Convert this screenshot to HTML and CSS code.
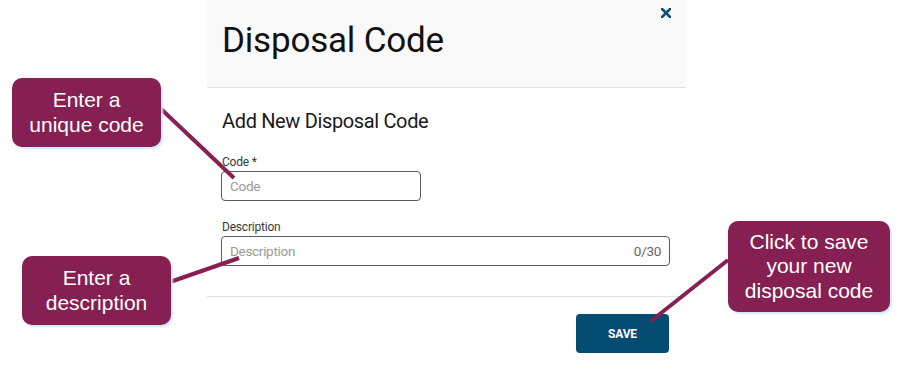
FILE: index.html
```html
<!DOCTYPE html>
<html lang="en">
<head>
<meta charset="utf-8">
<title>Disposal Code</title>
<link rel="stylesheet" href="styles.css">
</head>
<body>
<div class="modal">
  <div class="modal-header">
    <h1 class="title">Disposal Code</h1>
    <button class="close" aria-label="Close">
      <svg width="10" height="10" viewBox="0 0 10 10"><path d="M1 1 L9 9 M9 1 L1 9" stroke="#0b4f71" stroke-width="2.6" stroke-linecap="square"/></svg>
    </button>
  </div>
  <div class="modal-body">
    <h2 class="subtitle">Add New Disposal Code</h2>
    <label class="label">Code *</label>
    <div class="field field-short"><input class="input" placeholder="Code"></div>
    <label class="label label-gap">Description</label>
    <div class="field"><input class="input" placeholder="Description"><span class="counter">0/30</span></div>
  </div>
  <div class="modal-footer">
    <button class="save">SAVE</button>
  </div>
</div>

<svg class="lines" width="907" height="372" viewBox="0 0 907 372">
  <line x1="160" y1="108" x2="234" y2="178" />
  <line x1="170" y1="282" x2="239" y2="258" />
  <line x1="728" y1="260" x2="651" y2="321" />
</svg>

<div class="callout callout-code">Enter a<br>unique code</div>
<div class="callout callout-desc">Enter a<br>description</div>
<div class="callout callout-save">Click to save<br>your new<br>disposal code</div>
</body>
</html>
```
FILE: styles.css
```css
html, body {
  margin: 0;
  padding: 0;
  background: #ffffff;
  width: 907px;
  height: 372px;
  overflow: hidden;
  position: relative;
  font-family: Roboto, "Noto Sans", sans-serif;
}

.modal {
  margin-left: 207px;
  width: 479px;
}

.modal-header {
  background: #f9f9f9;
  border-bottom: 1px solid #e2e2e2;
  display: flex;
  justify-content: space-between;
  align-items: flex-start;
  padding: 8px 15px 0 15px;
  height: 79px;
}

.title {
  margin: 12px 0 0 0;
  font-size: 35px;
  line-height: 42px;
  font-weight: 400;
  color: #111111;
  letter-spacing: -0.2px;
}

.close {
  border: 0;
  background: transparent;
  padding: 0;
  margin: 0;
  width: 10px;
  height: 10px;
  display: block;
}
.close svg { display: block; }

.modal-body {
  padding: 21px 16px 30px 14px;
  border-bottom: 1px solid #e2e2e2;
}

.subtitle {
  margin: 0 0 21px 1px;
  font-size: 20px;
  line-height: 24px;
  font-weight: 400;
  color: #1a1a1a;
  letter-spacing: -0.35px;
}

.label {
  display: block;
  font-size: 12px;
  line-height: 16px;
  color: #3a3a3a;
  letter-spacing: -0.2px;
  margin: 0 0 1px 1px;
}
.label-gap { margin-top: 18px; }

.field {
  display: flex;
  align-items: center;
  height: 28px;
  border: 1px solid #5a5a5a;
  border-radius: 4px;
  padding: 0 8px;
  background: #fff;
}
.field-short { width: 182px; }

.input {
  flex: 1;
  min-width: 0;
  border: 0;
  outline: 0;
  background: transparent;
  padding: 0;
  font-family: Roboto, "Noto Sans", sans-serif;
  font-size: 13.5px;
  letter-spacing: -0.3px;
  color: #333;
}
.input::placeholder { color: #9a9a9a; }

.counter {
  font-size: 13.5px;
  letter-spacing: -0.3px;
  color: #666666;
}

.modal-footer {
  display: flex;
  justify-content: flex-end;
  padding: 17px 17px 0 0;
}

.save {
  width: 93px;
  height: 39px;
  border: 0;
  border-radius: 4px;
  background: #054c72;
  color: #ffffff;
  font-family: Roboto, "Noto Sans", sans-serif;
  font-weight: 700;
  font-size: 12px;
  letter-spacing: -0.2px;
}

.lines {
  position: absolute;
  left: 0;
  top: 0;
}
.lines line {
  stroke: #862052;
  stroke-width: 4;
}

.callout {
  position: absolute;
  background: #862052;
  color: #ffffff;
  border-radius: 10px;
  box-shadow: 2px 2px 2px #d3e6f8;
  font-family: "Liberation Sans", Arial, sans-serif;
  font-size: 21px;
  line-height: 24.5px;
  text-align: center;
  display: flex;
  align-items: center;
  justify-content: center;
}
.callout-code { left: 12px; top: 78px; width: 149px; height: 69px; }
.callout-desc { left: 22px; top: 256px; width: 149px; height: 69px; }
.callout-save { left: 728px; top: 221px; width: 162px; height: 91px; }
```
